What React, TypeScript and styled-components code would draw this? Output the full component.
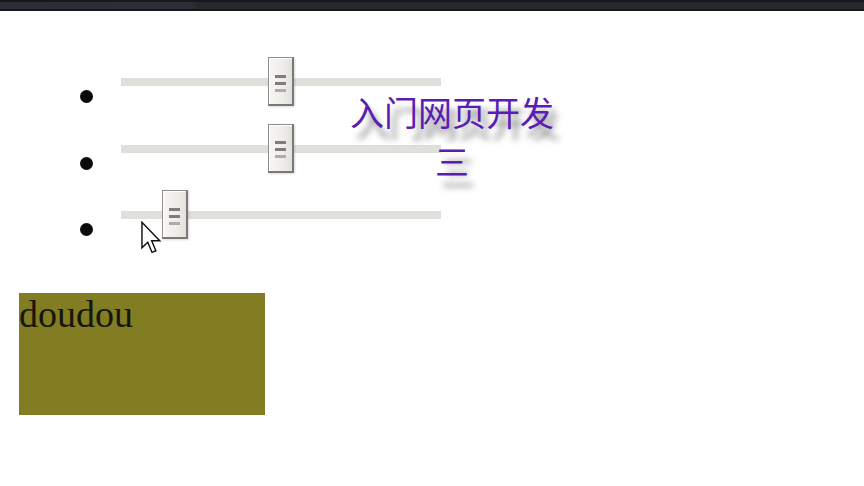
import React from "react"
import styled, { createGlobalStyle } from "styled-components"

const GlobalStyle = createGlobalStyle`
  html, body {
    margin: 0;
    padding: 0;
    background: #ffffff;
    overflow: hidden;
  }
  body {
    font-family: "Liberation Serif", "Times New Roman", serif;
  }
`

const Page = styled.div`
  position: relative;
  width: 864px;
  height: 486px;
  background: #ffffff;
`

const TopBar = styled.div`
  height: 11px;
  background: #17181c;
  display: flex;
  flex-direction: column;
  justify-content: center;
`

const TopBand = styled.div`
  height: 7px;
  background: linear-gradient(90deg, #2a2d36 0%, #2c2f38 22%, #25272d 23%, #26282e 100%);
`

const Stage = styled.div`
  position: relative;
  margin-top: 46px;
`

const List = styled.ul`
  list-style: none;
  margin: 0;
  padding: 0 0 0 80px;
`

const Row = styled.li`
  display: flex;
  align-items: flex-start;
  gap: 28px;
  height: 66.5px;
`

const Bullet = styled.span`
  width: 13px;
  height: 13px;
  margin-top: 33px;
  border-radius: 50%;
  background: #0a0a0a;
  flex: none;
`

const SliderBox = styled.div`
  position: relative;
  width: 320px;
  height: 50px;
  display: flex;
  align-items: center;
`

const Track = styled.div`
  width: 100%;
  height: 8px;
  background: #e1dfdb;
`

const Thumb = styled.div`
  position: absolute;
  top: 0;
  width: 26px;
  height: 49px;
  box-sizing: border-box;
  border: 1px solid #8f8d89;
  border-right: 2px solid #7a7874;
  border-bottom: 2px solid #7a7874;
  background: linear-gradient(90deg, #f7f6f3 0%, #efede9 60%, #e3e1dc 100%);
  box-shadow: inset 1px 1px 0 #ffffff, 1px 1px 2px rgba(0, 0, 0, 0.15);
  display: flex;
  flex-direction: column;
  align-items: center;
  justify-content: center;
  gap: 4px;
  padding-top: 4px;
`

const Grip = styled.span<{ $light?: boolean }>`
  width: 11px;
  height: 3px;
  background: ${(p) => (p.$light ? "#aeaca8" : "#7f7d79")};
`

const Title = styled.div`
  position: absolute;
  left: 347px;
  top: 30px;
  width: 210px;
  text-align: center;
  font-family: "Noto Sans CJK SC", "Noto Sans", sans-serif;
  font-size: 34px;
  line-height: 49px;
  color: #5a1db3;
  text-shadow: 6px 11px 6px rgba(80, 80, 80, 0.7);
`

const Card = styled.div`
  margin: 36px 0 0 19px;
  width: 246px;
  height: 122px;
  background: #827d22;
  color: #17160c;
  font-family: "Liberation Serif", "Times New Roman", serif;
  font-size: 38px;
  line-height: 42px;
`

const Pointer = styled.svg`
  position: absolute;
  left: 140px;
  top: 221px;
  width: 24px;
  height: 34px;
  pointer-events: none;
`

const THUMB_W = 26
const TRACK_W = 320

function Slider({ value }: { value: number }) {
  const left = ((TRACK_W - THUMB_W) * value) / 100
  return (
    <SliderBox>
      <Track />
      <Thumb style={{ left }}>
        <Grip />
        <Grip />
        <Grip $light />
      </Thumb>
    </SliderBox>
  )
}

const values = [50, 50, 14]

export default function App() {
  return (
    <Page>
      <GlobalStyle />
      <TopBar>
        <TopBand />
      </TopBar>
      <Stage>
        <List>
          {values.map((v, i) => (
            <Row key={i}>
              <Bullet />
              <Slider value={v} />
            </Row>
          ))}
        </List>
        <Title>入门网页开发三</Title>
      </Stage>
      <Card>doudou</Card>
      <Pointer viewBox="0 0 14 21">
        <path
          d="M0.8 0.8 L0.8 16.5 L4.4 13.1 L7 19.4 L9.4 18.4 L6.8 12.2 L11.8 12.2 Z"
          fill="#ffffff"
          stroke="#111111"
          strokeWidth="0.9"
          strokeLinejoin="miter"
        />
      </Pointer>
    </Page>
  )
}
